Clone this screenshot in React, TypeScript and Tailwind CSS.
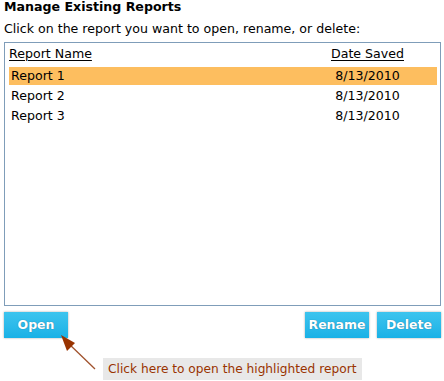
const reports = [
  { name: 'Report 1', date: '8/13/2010', selected: true },
  { name: 'Report 2', date: '8/13/2010', selected: false },
  { name: 'Report 3', date: '8/13/2010', selected: false },
]

function Btn({ label, className = '' }: { label: string; className?: string }) {
  return (
    <button
      className={`h-[26px] w-[64px] bg-gradient-to-b from-[#3cc4ee] to-[#18b1e6] text-white font-bold text-[12.5px] shadow-[0_0_2px_rgba(0,0,0,0.35)] [text-shadow:0_0_1px_#1a6f90] ${className}`}
    >
      {label}
    </button>
  )
}

export default function App() {
  return (
    <div className="relative w-[444px] h-[381px] bg-white pl-[4px] pr-[3px] font-['DejaVu_Sans',Verdana,sans-serif] text-black">
      <h1 className="text-[12.6px] font-bold leading-[13px]">Manage Existing Reports</h1>
      <p className="text-[12.6px] leading-[14px] mt-[9px]">
        Click on the report you want to open, rename, or delete:
      </p>

      {/* list of saved reports */}
      <div className="mt-[6px] h-[264px] border border-[#7f9db9] px-[4px] pr-[3px] pt-[2px]">
        <div className="flex h-[18px] items-center text-[12.6px]">
          <span className="flex-1 underline underline-offset-[2px]">Report Name</span>
          <span className="w-[139px] text-center underline underline-offset-[2px]">Date Saved</span>
        </div>
        <div className="mt-[4px] flex flex-col gap-[2px]">
          {reports.map((r) => (
            <div
              key={r.name}
              className={`flex h-[18px] items-center text-[12.6px] ${r.selected ? 'bg-[#fdbe5f]' : ''}`}
            >
              <span className="flex-1 pl-[2px]">{r.name}</span>
              <span className="w-[139px] text-center">{r.date}</span>
            </div>
          ))}
        </div>
      </div>

      <div className="mt-[6px] flex">
        <Btn label="Open" />
        <div className="flex-1" />
        <Btn label="Rename" />
        <Btn label="Delete" className="ml-[8px]" />
      </div>

      <div className="mt-[20px] ml-[99px] w-[259px] h-[22px] bg-[#e8e8e8] flex items-center pl-[5px] whitespace-nowrap text-[12.2px] text-[#993300]">
        Click here to open the highlighted report
      </div>

      {/* pointer arrow */}
      <svg className="absolute left-0 top-0 pointer-events-none" width="444" height="381">
        <line x1="95" y1="369" x2="67" y2="342" stroke="#a0522d" strokeWidth="1.3" />
        <polygon points="61,335 75,343 67,351" fill="#993300" />
      </svg>
    </div>
  )
}
